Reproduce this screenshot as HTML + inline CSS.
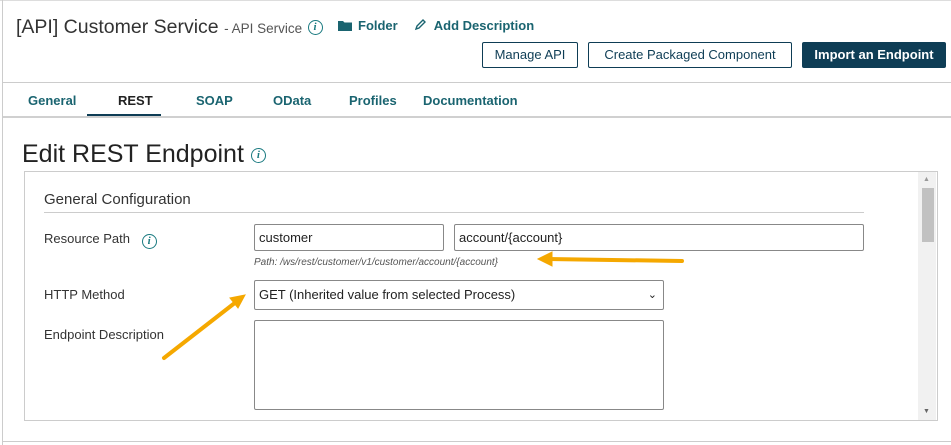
<!DOCTYPE html>
<html><head><style>
*{box-sizing:border-box;margin:0;padding:0}
body{width:951px;height:445px;background:#fff;font-family:"Liberation Sans",sans-serif;position:relative;overflow:hidden;color:#222}
.a{position:absolute}
.teal{color:#1a6470}
.btn{position:absolute;top:42px;height:26px;border:1px solid #0e3d55;border-radius:2px;font-size:13px;color:#0e3d55;text-align:center;line-height:24px;background:#fff}
.tab{position:absolute;top:93px;font-size:13px;color:#1a6470;font-weight:bold}
.inp{position:absolute;border:1px solid #888;border-radius:2px;background:#fff;font-size:13px;padding-left:4px;color:#222}
.info{display:inline-block;width:15px;height:15px;border:1.3px solid #1a7a80;border-radius:50%;color:#1a7a80;font:italic bold 11px "Liberation Serif",serif;text-align:center;line-height:13px}
.lbl{position:absolute;left:44px;font-size:13px;color:#333}
</style></head><body>
<div class="a" style="left:0;top:0;width:951px;height:1px;background:#ddd"></div>
<div class="a" style="left:2px;top:0;width:1px;height:445px;background:#ccc"></div>
<div class="a" style="left:16px;top:16px;font-size:19.5px;color:#333;white-space:nowrap">[API] Customer Service <span style="font-size:13.5px;color:#555">- API Service</span> <span class="info" style="vertical-align:3px">i</span></div>
<div class="a teal" style="left:338px;top:18px;font-size:13px;font-weight:bold;white-space:nowrap"><svg width="14" height="11" viewBox="0 0 14 11" style="vertical-align:-1px;margin-right:6px"><path d="M0 1h5l1.5 1.5H14V11H0z" fill="#1a6470"/></svg>Folder<span style="margin-left:16px"><svg width="12" height="12" viewBox="0 0 12 12" style="vertical-align:-1px;margin-right:8px"><path d="M2 10l1-3 6-6 2 2-6 6z" fill="none" stroke="#1a6470" stroke-width="1.4"/></svg>Add Description</span></div>
<div class="btn" style="left:482px;width:96px">Manage API</div>
<div class="btn" style="left:588px;width:204px">Create Packaged Component</div>
<div class="btn" style="left:802px;width:144px;background:#0e3d55;color:#fff;font-weight:bold">Import an Endpoint</div>
<div class="a" style="left:3px;top:82px;width:948px;height:1px;background:#ccc"></div>
<div class="tab" style="left:28px">General</div>
<div class="tab" style="left:118px;color:#222">REST</div>
<div class="tab" style="left:196px">SOAP</div>
<div class="tab" style="left:273px">OData</div>
<div class="tab" style="left:349px">Profiles</div>
<div class="tab" style="left:423px">Documentation</div>
<div class="a" style="left:3px;top:116px;width:948px;height:2px;background:#d0d0d0"></div>
<div class="a" style="left:87px;top:114px;width:74px;height:2px;background:#0e3d55"></div>
<div class="a" style="left:22px;top:140px;font-size:25px;color:#222;white-space:nowrap">Edit REST Endpoint <span class="info" style="vertical-align:4px">i</span></div>
<div class="a" style="left:24px;top:171px;width:914px;height:250px;border:1px solid #ccc"></div>
<div class="a" style="left:918px;top:172px;width:18px;height:248px;background:#f1f1f1"></div>
<div class="a" style="left:922px;top:188px;width:12px;height:54px;background:#c1c1c1"></div>
<div class="a" style="left:923px;top:176px;font-size:7px;color:#999">▲</div>
<div class="a" style="left:923px;top:408px;font-size:7px;color:#666">▼</div>
<div class="a" style="left:44px;top:191px;font-size:15px;color:#333">General Configuration</div>
<div class="a" style="left:44px;top:212px;width:820px;height:1px;background:#ccc"></div>
<div class="lbl" style="top:231px">Resource Path <span class="info" style="margin-left:8px;vertical-align:-1px">i</span></div>
<div class="inp" style="left:254px;top:224px;width:190px;height:27px;line-height:25px">customer</div>
<div class="inp" style="left:454px;top:224px;width:410px;height:27px;line-height:25px">account/{account}</div>
<div class="a" style="left:254px;top:257px;font-size:10px;font-style:italic;color:#555">Path: /ws/rest/customer/v1/customer/account/{account}</div>
<div class="lbl" style="top:287px">HTTP Method</div>
<div class="inp" style="left:254px;top:280px;width:410px;height:30px;line-height:28px">GET (Inherited value from selected Process)<span style="position:absolute;right:6px;top:0;font-size:11px">&#8964;</span></div>
<div class="lbl" style="top:327px">Endpoint Description</div>
<div class="inp" style="left:254px;top:320px;width:410px;height:90px"></div>
<div class="a" style="left:3px;top:441px;width:948px;height:1px;background:#ccc"></div>
<svg class="a" style="left:0;top:0" width="951" height="445">
<g stroke="#f5a800" stroke-width="4" fill="#f5a800" stroke-linecap="round">
<line x1="682" y1="261" x2="548" y2="259"/>
<path d="M538 259l14-7v14z" stroke-width="1"/>
<line x1="164" y1="358" x2="236" y2="302"/>
<path d="M245 295l-15 3 8 10z" stroke-width="1"/>
</g></svg>
</body></html>
